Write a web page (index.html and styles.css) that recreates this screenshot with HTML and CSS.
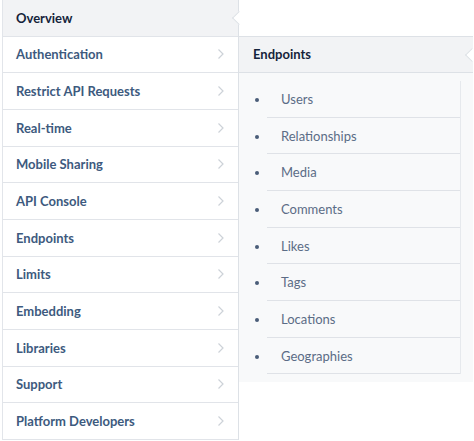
FILE: index.html
```html
<!DOCTYPE html>
<html lang="en">

<head>
    <meta charset="UTF-8">
    <meta name="viewport" content="width=device-width, initial-scale=1.0">
    <title>API Docs Menu</title>
    <link rel="stylesheet" href="styles.css">
</head>

<body>

    <div id="wrapper">
        <ul class="nav">
            <li class="nav-item current"><span>Overview</span></li>
            <li class="nav-item"><span>Authentication</span><svg class="chev" viewBox="0 0 8 12"><polyline points="1.5,1.5 6,6 1.5,10.5"/></svg></li>
            <li class="nav-item"><span>Restrict API Requests</span><svg class="chev" viewBox="0 0 8 12"><polyline points="1.5,1.5 6,6 1.5,10.5"/></svg></li>
            <li class="nav-item"><span>Real-time</span><svg class="chev" viewBox="0 0 8 12"><polyline points="1.5,1.5 6,6 1.5,10.5"/></svg></li>
            <li class="nav-item"><span>Mobile Sharing</span><svg class="chev" viewBox="0 0 8 12"><polyline points="1.5,1.5 6,6 1.5,10.5"/></svg></li>
            <li class="nav-item"><span>API Console</span><svg class="chev" viewBox="0 0 8 12"><polyline points="1.5,1.5 6,6 1.5,10.5"/></svg></li>
            <li class="nav-item"><span>Endpoints</span><svg class="chev" viewBox="0 0 8 12"><polyline points="1.5,1.5 6,6 1.5,10.5"/></svg></li>
            <li class="nav-item"><span>Limits</span><svg class="chev" viewBox="0 0 8 12"><polyline points="1.5,1.5 6,6 1.5,10.5"/></svg></li>
            <li class="nav-item"><span>Embedding</span><svg class="chev" viewBox="0 0 8 12"><polyline points="1.5,1.5 6,6 1.5,10.5"/></svg></li>
            <li class="nav-item"><span>Libraries</span><svg class="chev" viewBox="0 0 8 12"><polyline points="1.5,1.5 6,6 1.5,10.5"/></svg></li>
            <li class="nav-item"><span>Support</span><svg class="chev" viewBox="0 0 8 12"><polyline points="1.5,1.5 6,6 1.5,10.5"/></svg></li>
            <li class="nav-item"><span>Platform Developers</span><svg class="chev" viewBox="0 0 8 12"><polyline points="1.5,1.5 6,6 1.5,10.5"/></svg></li>
        </ul>

        <div class="submenu">
            <h3 class="sub-title">Endpoints</h3>
            <ul class="sub-list">
                <li>Users</li>
                <li>Relationships</li>
                <li>Media</li>
                <li>Comments</li>
                <li>Likes</li>
                <li>Tags</li>
                <li>Locations</li>
                <li>Geographies</li>
            </ul>
        </div>
    </div>

</body>

</html>
```

FILE: styles.css
```css
* {
    box-sizing: border-box;
}

body {
    margin: 0;
    font-family: Lato, "Liberation Sans", sans-serif;
    background: #fff;
}

ul {
    margin: 0;
    padding: 0;
    list-style: none;
}

#wrapper {
    display: flex;
    align-items: flex-start;
    padding-left: 2px;
}

/* left menu */
.nav {
    width: 237px;
    border-left: 1px solid #e2e5ea;
    border-right: 1px solid #dde1e6;
}

.nav-item {
    position: relative;
    display: flex;
    align-items: center;
    justify-content: space-between;
    height: 36.67px;
    padding: 0 13px 0 13px;
    border-bottom: 1px solid #e1e4e9;
    font-size: 13px;
    font-weight: 700;
    color: #3d5a7e;
    background: #fff;
}

.nav-item.current {
    background: #f2f3f5;
    color: #15233b;
}

.nav-item.current::after {
    content: "";
    position: absolute;
    right: -6px;
    top: 13px;
    width: 9px;
    height: 9px;
    background: #fff;
    border-left: 1px solid #dde1e6;
    border-bottom: 1px solid #dde1e6;
    transform: rotate(45deg);
}

.chev {
    width: 8px;
    height: 12px;
    fill: none;
    stroke: #cdd2d8;
    stroke-width: 1.2;
}

/* right submenu */
.submenu {
    margin-top: 36px;
    width: 234px;
    background: #f8f9fa;
    padding-bottom: 8px;
}

.sub-title {
    position: relative;
    margin: 0;
    height: 37px;
    line-height: 35px;
    padding-left: 14px;
    font-size: 13px;
    font-weight: 700;
    color: #15233b;
    background: #f2f3f5;
    border-top: 1px solid #dde1e6;
    border-bottom: 1px solid #dde1e6;
}

.sub-title::after {
    content: "";
    position: absolute;
    right: -4px;
    top: 13px;
    width: 9px;
    height: 9px;
    background: #fff;
    border-left: 1px solid #dde1e6;
    border-bottom: 1px solid #dde1e6;
    transform: rotate(45deg);
}

.sub-list {
    margin: 8px 12px 0 28px;
    border-right: 1px solid #e6e9ed;
}

.sub-list li {
    position: relative;
    height: 36.67px;
    line-height: 36px;
    padding-left: 14px;
    border-bottom: 1px solid #dfe2e7;
    font-size: 13px;
    color: #5b6c86;
}

.sub-list li::before {
    content: "";
    position: absolute;
    left: -12px;
    top: 17px;
    width: 4px;
    height: 4px;
    border-radius: 50%;
    background: #4a5d78;
}
```
